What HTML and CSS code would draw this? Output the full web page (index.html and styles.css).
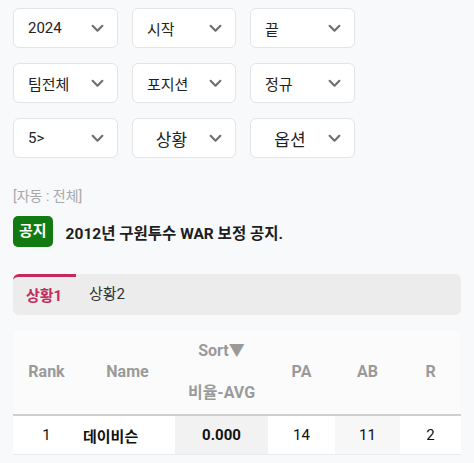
FILE: index.html
```html
<!DOCTYPE html>
<html lang="ko">
<head>
<meta charset="utf-8">
<link rel="stylesheet" href="styles.css">
</head>
<body>
<div class="page">
  <div class="filters">
    <div class="sel"><span class="val">2024</span><svg class="chev" viewBox="0 0 12 8"><path d="M1.5 1.5 L6 6 L10.5 1.5" /></svg></div>
    <div class="sel"><span class="val">시작</span><svg class="chev" viewBox="0 0 12 8"><path d="M1.5 1.5 L6 6 L10.5 1.5" /></svg></div>
    <div class="sel"><span class="val">끝</span><svg class="chev" viewBox="0 0 12 8"><path d="M1.5 1.5 L6 6 L10.5 1.5" /></svg></div>
    <div class="sel"><span class="val">팀전체</span><svg class="chev" viewBox="0 0 12 8"><path d="M1.5 1.5 L6 6 L10.5 1.5" /></svg></div>
    <div class="sel"><span class="val">포지션</span><svg class="chev" viewBox="0 0 12 8"><path d="M1.5 1.5 L6 6 L10.5 1.5" /></svg></div>
    <div class="sel"><span class="val">정규</span><svg class="chev" viewBox="0 0 12 8"><path d="M1.5 1.5 L6 6 L10.5 1.5" /></svg></div>
    <div class="sel"><span class="val">5&gt;</span><svg class="chev" viewBox="0 0 12 8"><path d="M1.5 1.5 L6 6 L10.5 1.5" /></svg></div>
    <div class="sel"><span class="val center">상황</span><svg class="chev" viewBox="0 0 12 8"><path d="M1.5 1.5 L6 6 L10.5 1.5" /></svg></div>
    <div class="sel"><span class="val center">옵션</span><svg class="chev" viewBox="0 0 12 8"><path d="M1.5 1.5 L6 6 L10.5 1.5" /></svg></div>
  </div>

  <div class="auto">[자동 : 전체]</div>

  <div class="notice">
    <span class="badge">공지</span>
    <span class="notice-title">2012년 구원투수 WAR 보정 공지.</span>
  </div>

  <div class="tabs">
    <div class="tab active">상황1</div>
    <div class="tab">상황2</div>
  </div>

  <div class="card">
    <table class="stats">
      <colgroup>
        <col class="c-rank"><col class="c-name"><col class="c-avg"><col class="c-pa"><col class="c-ab"><col class="c-r">
      </colgroup>
      <thead>
        <tr>
          <th>Rank</th>
          <th>Name</th>
          <th>Sort▼<br>비율-AVG</th>
          <th>PA</th>
          <th>AB</th>
          <th>R</th>
        </tr>
      </thead>
      <tbody>
        <tr>
          <td>1</td>
          <td class="name">데이비슨</td>
          <td class="avg">0.000</td>
          <td>14</td>
          <td class="ab">11</td>
          <td>2</td>
        </tr>
      </tbody>
    </table>
  </div>
</div>
</body>
</html>
```

FILE: styles.css
```css
html, body {
  margin: 0;
  padding: 0;
}
body {
  background: #f8f9fa;
  font-family: Roboto, "Noto Sans CJK KR", "Noto Sans", sans-serif;
  color: #222;
}
.page {
  padding: 8px 13px 0 13px;
}
.filters {
  display: grid;
  grid-template-columns: 105px 104px 105px;
  column-gap: 14px;
  row-gap: 15px;
}
.sel {
  height: 40px;
  box-sizing: border-box;
  background: #fff;
  border: 1px solid #e3e4e6;
  border-radius: 6px;
  display: flex;
  align-items: center;
  padding: 0 13px 0 14px;
}
.val {
  flex: 1;
  font-size: 15px;
  color: #222;
}
.val.center {
  text-align: center;
  font-size: 17px;
  margin-right: 13px;
}
.chev {
  width: 13px;
  height: 9px;
  fill: none;
  stroke: #6f6f74;
  stroke-width: 2;
  stroke-linecap: round;
  stroke-linejoin: round;
}
.auto {
  margin-top: 28px;
  font-size: 14px;
  line-height: 20px;
  color: #a8a8a8;
}
.notice {
  margin-top: 10px;
  display: flex;
  align-items: center;
  gap: 13px;
}
.badge {
  background: #117a10;
  color: #fff;
  font-weight: 700;
  font-size: 15px;
  height: 31px;
  line-height: 31px;
  padding: 0 6px;
  border-radius: 5px;
}
.notice-title {
  font-weight: 700;
  font-size: 15.5px;
  color: #1d1d1d;
}
.tabs {
  margin-top: 27px;
  background: #ececec;
  border-radius: 6px;
  display: flex;
  height: 41px;
}
.tab {
  padding: 0 13px;
  font-size: 15px;
  line-height: 41px;
  color: #333;
  box-sizing: border-box;
}
.tab.active {
  color: #c42a5a;
  font-weight: 700;
  border-top: 3px solid #c42a5a;
  line-height: 38px;
  border-top-left-radius: 6px;
  width: 63px;
}
.card {
  margin-top: 15px;
  background: #fbfbfb;
  border-radius: 4px;
  box-shadow: 0 0 2px rgba(0,0,0,0.04);
}
.stats {
  width: 448px;
  border-collapse: collapse;
  table-layout: fixed;
}
.c-rank { width: 67px; }
.c-name { width: 95px; }
.c-avg { width: 93px; }
.c-pa { width: 67px; }
.c-ab { width: 65px; }
.c-r { width: 61px; }
.stats th {
  font-size: 16px;
  font-weight: 700;
  color: #9a9a9a;
  line-height: 42px;
  padding: 0;
  text-align: center;
  border-bottom: 2px solid #cfcfcf;
}
.stats td {
  font-size: 15px;
  color: #111;
  text-align: center;
  height: 38px;
  padding: 0;
  background: #fff;
  border-bottom: 1px solid #ebebeb;
}
.stats td.name {
  font-weight: 700;
  text-align: left;
  padding-left: 3px;
}
.stats td.avg {
  font-weight: 700;
  background: #f2f2f2;
}
.stats td.ab {
  background: #f7f7f7;
}
```
